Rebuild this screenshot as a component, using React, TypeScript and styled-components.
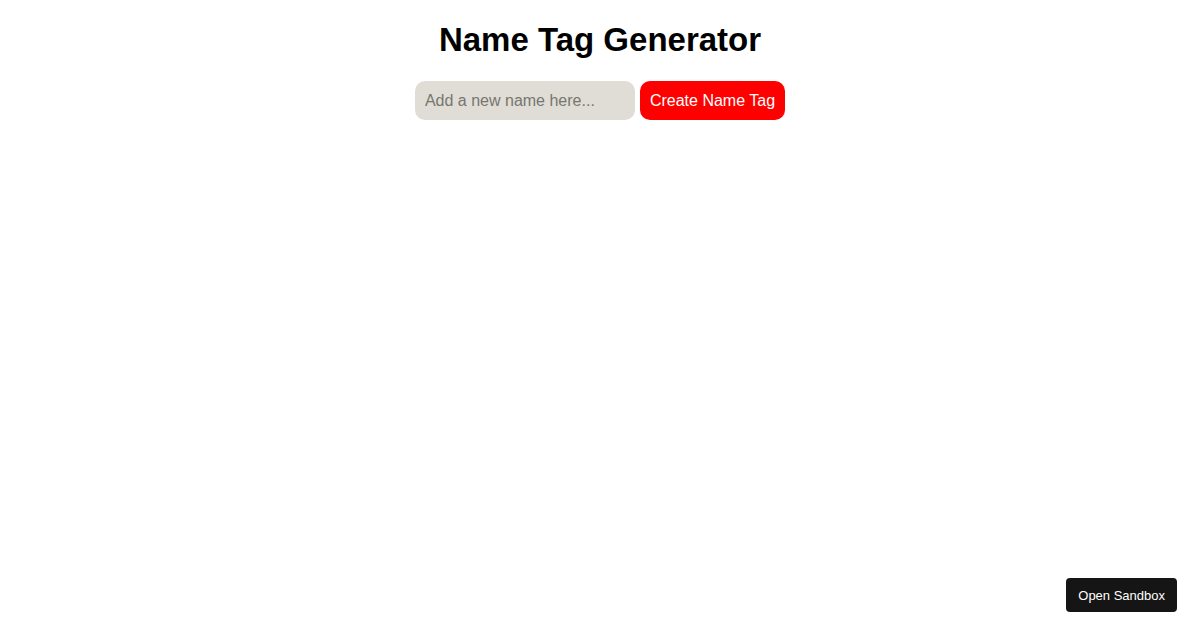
import React, { useState } from 'react'
import styled, { createGlobalStyle } from 'styled-components'

const GlobalStyle = createGlobalStyle`
  html, body {
    margin: 0;
    padding: 0;
    background: #ffffff;
    font-family: "Liberation Sans", Arial, sans-serif;
  }
`

const Page = styled.div`
  width: 1200px;
  height: 630px;
  display: flex;
  flex-direction: column;
  align-items: center;
  position: relative;
`

const Title = styled.h1`
  margin: 20px 0 0;
  font-size: 33px;
  font-weight: 700;
  color: #000;
  line-height: 40px;
`

const Form = styled.form`
  margin-top: 21px;
  display: flex;
  gap: 5px;
`

const NameInput = styled.input`
  width: 220px;
  height: 39px;
  box-sizing: border-box;
  padding: 0 10px;
  border: none;
  border-radius: 10px;
  background: #dfddd5;
  font-family: "Liberation Sans", Arial, sans-serif;
  font-size: 16px;
  color: #333;
  outline: none;

  &::placeholder {
    color: #777670;
  }
`

const CreateButton = styled.button`
  height: 39px;
  padding: 0 10px;
  border: none;
  border-radius: 10px;
  background: #ff0000;
  color: #fff;
  font-family: "Liberation Sans", Arial, sans-serif;
  font-size: 16px;
  cursor: pointer;
`

const SandboxButton = styled.a`
  position: absolute;
  right: 23px;
  bottom: 18px;
  height: 34px;
  padding: 0 12px;
  display: flex;
  align-items: center;
  background: #151515;
  color: #fff;
  border-radius: 4px;
  font-family: "Liberation Sans", Arial, sans-serif;
  font-size: 13px;
  text-decoration: none;
`

const App = () => {
  const [name, setName] = useState('')

  return (
    <>
      <GlobalStyle />
      <Page>
        <Title>Name Tag Generator</Title>
        <Form onSubmit={e => e.preventDefault()}>
          <NameInput
            value={name}
            placeholder="Add a new name here..."
            onChange={e => setName(e.target.value)}
          />
          <CreateButton type="submit">Create Name Tag</CreateButton>
        </Form>
        <SandboxButton href="#">Open Sandbox</SandboxButton>
      </Page>
    </>
  )
}

export default App
